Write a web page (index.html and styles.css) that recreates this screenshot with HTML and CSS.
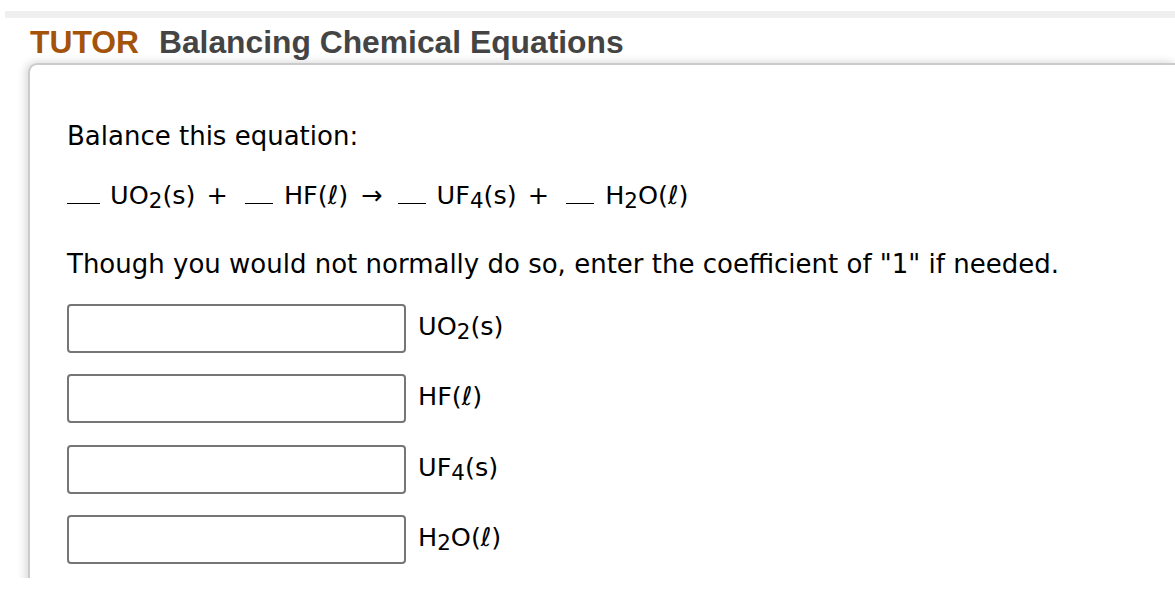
FILE: index.html
```html
<!DOCTYPE html>
<html>
<head>
<meta charset="utf-8">
<link rel="stylesheet" href="styles.css">
</head>
<body>
<div class="page">
  <div class="topbar"></div>
  <h1 class="title"><span class="tutor">TUTOR</span><span class="name">Balancing Chemical Equations</span></h1>
  <div class="card">
    <p class="line intro">Balance this equation:</p>
    <p class="line equation"><span class="blank first"></span><span class="sp">UO<sub>2</sub>(s)</span><span class="op">+</span><span class="blank"></span><span class="sp">HF(ℓ)</span><span class="op arrow">→</span><span class="blank"></span><span class="sp">UF<sub>4</sub>(s)</span><span class="op">+</span><span class="blank"></span><span class="sp">H<sub>2</sub>O(ℓ)</span></p>
    <p class="line note">Though you would not normally do so, enter the coefficient of "1" if needed.</p>
    <div class="answers">
      <div class="row"><input class="box" type="text"><span class="label">UO<sub>2</sub>(s)</span></div>
      <div class="row"><input class="box" type="text"><span class="label">HF(ℓ)</span></div>
      <div class="row"><input class="box" type="text"><span class="label">UF<sub>4</sub>(s)</span></div>
      <div class="row"><input class="box" type="text"><span class="label">H<sub>2</sub>O(ℓ)</span></div>
    </div>
  </div>
</div>
</body>
</html>
```
FILE: styles.css
```css
html, body {
  margin: 0;
  padding: 0;
  background: #ffffff;
}
.page {
  height: 578px;
  overflow: hidden;
  padding-top: 11px;
  box-sizing: border-box;
}
.topbar {
  margin-left: 5px;
  height: 7px;
  background: #efefef;
}
.title {
  margin: 6px 0 3px 30px;
  font-family: "Liberation Sans", Arial, sans-serif;
  font-weight: bold;
  font-size: 31.8px;
  line-height: 36px;
  white-space: nowrap;
}
.tutor {
  color: #a4530b;
  margin-right: 20px;
}
.name {
  color: #444444;
}
.card {
  margin-left: 28px;
  border: 2px solid #cbcbcb;
  border-right: none;
  border-radius: 9px 0 0 9px;
  box-shadow: -3px 0 10px rgba(0, 0, 0, 0.12), 0 -2px 8px rgba(0, 0, 0, 0.05);
  padding: 55px 0 40px 37px;
  height: 600px;
  font-family: "DejaVu Sans", Verdana, sans-serif;
  font-size: 26px;
  color: #000;
}
.line {
  margin: 0;
  line-height: 32px;
  white-space: nowrap;
}
.equation {
  margin-top: 27.35px;
  font-size: 25.5px;
}
.blank {
  display: inline-block;
  width: 28px;
  height: 1px;
  border-bottom: 1px solid #000;
  margin-right: 11px;
}
.blank.first {
  width: 33px;
  margin-right: 10px;
}
.op {
  display: inline-block;
  margin: 0 17px 0 11px;
}
.op.arrow {
  margin: 0 15px 0 13px;
}
sub {
  font-size: 0.84em;
  vertical-align: -0.2em;
  line-height: 0;
}
.note {
  margin-top: 36.65px;
}
.answers {
  margin-top: 24px;
}
.row {
  display: flex;
  align-items: flex-start;
  margin-bottom: 21.33px;
}
.box {
  width: 339px;
  height: 49px;
  box-sizing: border-box;
  border: 2px solid #767676;
  border-radius: 4px;
  margin: 0 12px 0 0;
  padding: 0;
  background: #fff;
}
.label {
  padding-top: 6px;
  line-height: 32px;
  font-size: 25.5px;
}
```
